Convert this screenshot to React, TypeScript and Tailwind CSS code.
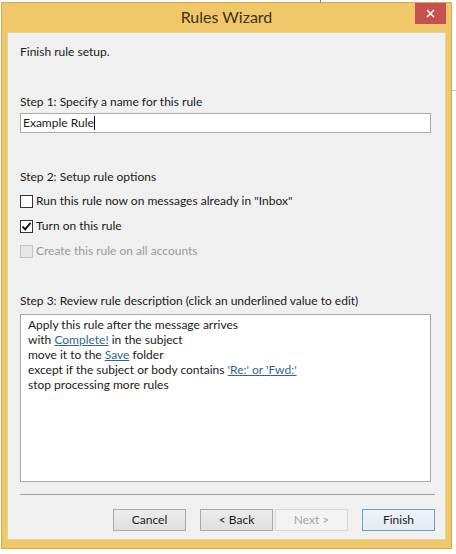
import React from "react";

const font = { fontFamily: 'Lato, "Noto Sans", Arial, sans-serif' };

function CheckBox({ checked, disabled }: { checked?: boolean; disabled?: boolean }) {
  return (
    <div
      className={`w-[13px] h-[13px] border flex items-center justify-center shrink-0 ${
        disabled ? "border-[#c4c4c4] bg-[#e6e6e6]" : "border-[#333333] bg-white"
      }`}
    >
      {checked && (
        <svg width="11" height="11" viewBox="0 0 11 11">
          <path d="M1.5 5.5 L4.2 8.3 L9.5 1.8" fill="none" stroke="#111" strokeWidth="1.9" />
        </svg>
      )}
    </div>
  );
}

function Option({ label, checked, disabled, className }: { label: string; checked?: boolean; disabled?: boolean; className: string }) {
  return (
    <div className={`flex items-center gap-[3px] h-4 ${className}`}>
      <CheckBox checked={checked} disabled={disabled} />
      <span className={disabled ? "text-[#9a9a9a]" : "text-[#1a1a1a]"}>{label}</span>
    </div>
  );
}

function Btn({ label, variant }: { label: string; variant?: "default" | "disabled" }) {
  const cls =
    variant === "default"
      ? "border-[#6f9ec9] bg-gradient-to-b from-[#eef3f8] to-[#e4ebf2] text-[#1a1a1a]"
      : variant === "disabled"
      ? "border-[#d6d6d6] bg-[#f3f3f3] text-[#a3a3a3]"
      : "border-[#a9a9a9] bg-gradient-to-b from-[#ececec] to-[#dfdfdf] text-[#1a1a1a]";
  return (
    <div className={`w-[73px] h-[22px] border flex items-center justify-center ${cls}`}>{label}</div>
  );
}

export default function App() {
  return (
    <div className="w-[456px] h-[554px] bg-white relative overflow-hidden" style={font}>
      {/* background app lines */}
      <div className="absolute left-[320px] top-0 w-px h-[3px] bg-[#8c8c8c]" />
      <div className="absolute left-[452px] top-[90px] w-[4px] h-px bg-[#c8c8c8]" />

      {/* window */}
      <div className="ml-[1px] mt-[2px] w-[451px] h-[547px] border border-[#d6a94f] bg-[#f0c769] flex flex-col">
        {/* title bar */}
        <div className="h-[29px] relative flex items-center justify-center shrink-0">
          <span className="text-[16px] text-[#3e3222] mt-[-1px]">Rules Wizard</span>
          <div className="absolute right-[5px] top-0 w-[31px] h-[21px] bg-[#c75050] flex items-center justify-center">
            <svg width="9" height="9" viewBox="0 0 9 9">
              <path d="M1 1 L8 8 M8 1 L1 8" stroke="#ffffff" strokeWidth="1.6" />
            </svg>
          </div>
        </div>

        {/* content */}
        <div className="ml-[5px] w-[439px] h-[508px] bg-[#f0f0f0] border border-[#e2d3a5] text-[12px] leading-4 text-[#1a1a1a] pl-[12px] flex flex-col">
          <div className="mt-[11px]">Finish rule setup.</div>

          <div className="mt-[34px]">Step 1: Specify a name for this rule</div>
          <div className="mt-[3px] w-[411px] h-[20px] border border-[#a9a9a9] bg-white flex items-center pl-[2px]">
            <span>Example Rule</span>
            <span className="w-px h-[14px] bg-black" />
          </div>

          <div className="mt-[36px]">Step 2: Setup rule options</div>
          <Option className="mt-[8px]" label={'Run this rule now on messages already in "Inbox"'} />
          <Option className="mt-[9px]" label="Turn on this rule" checked />
          <Option className="mt-[9px]" label="Create this rule on all accounts" disabled />

          <div className="mt-[34px]">Step 3: Review rule description (click an underlined value to edit)</div>
          <div className="mt-[5px] w-[411px] h-[168px] border border-[#a9a9a9] bg-white pl-[7px] pt-[2px] leading-[15px]">
            <div>Apply this rule after the message arrives</div>
            <div>
              with <span className="text-[#2f6791] underline">Complete!</span> in the subject
            </div>
            <div>
              move it to the <span className="text-[#2f6791] underline">Save</span> folder
            </div>
            <div>
              except if the subject or body contains{" "}
              <span className="text-[#2f6791] underline">'Re:' or 'Fwd:'</span>
            </div>
            <div>stop processing more rules</div>
          </div>

          <div className="mt-[12px] w-[415px] h-px bg-[#a0a0a0]" />

          <div className="mt-[14px] w-[415px] flex justify-end gap-[2px]">
            <Btn label="Cancel" />
            <div className="w-[10px]" />
            <Btn label="< Back" />
            <Btn label="Next >" variant="disabled" />
            <div className="w-[10px]" />
            <Btn label="Finish" variant="default" />
          </div>
        </div>
      </div>
    </div>
  );
}
